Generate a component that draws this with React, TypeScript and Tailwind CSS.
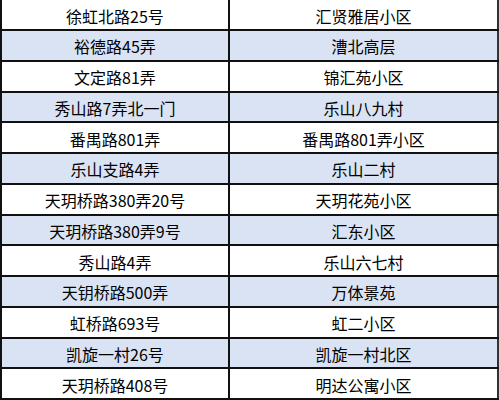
const rows: [string, string][] = [
  ['徐虹北路25号', '汇贤雅居小区'],
  ['裕德路45弄', '漕北高层'],
  ['文定路81弄', '锦汇苑小区'],
  ['秀山路7弄北一门', '乐山八九村'],
  ['番禺路801弄', '番禺路801弄小区'],
  ['乐山支路4弄', '乐山二村'],
  ['天玥桥路380弄20号', '天玥花苑小区'],
  ['天玥桥路380弄9号', '汇东小区'],
  ['秀山路4弄', '乐山六七村'],
  ['天钥桥路500弄', '万体景苑'],
  ['虹桥路693号', '虹二小区'],
  ['凯旋一村26号', '凯旋一村北区'],
  ['天玥桥路408号', '明达公寓小区'],
];

export default function App() {
  return (
    <div
      className="w-[499px] h-[400px] overflow-hidden bg-white text-[16px] text-black"
      style={{ fontFamily: '"Noto Sans CJK SC", "Noto Sans", sans-serif' }}
    >
      {rows.map(([left, right], i) => (
        <div
          key={i}
          className={`grid grid-cols-[230px_1fr] box-border border-b-2 border-[#111] ${
            i === 0 ? 'h-[31px]' : 'h-[30.75px]'
          } ${i % 2 === 1 ? 'bg-[#dae3f3]' : 'bg-white'}`}
        >
          <div className="flex items-center justify-center border-l-2 border-r-2 border-[#111] pt-[2px] leading-none">
            {left}
          </div>
          <div className="flex items-center justify-center border-r-2 border-[#333] pt-[2px] leading-none">
            {right}
          </div>
        </div>
      ))}
    </div>
  );
}
